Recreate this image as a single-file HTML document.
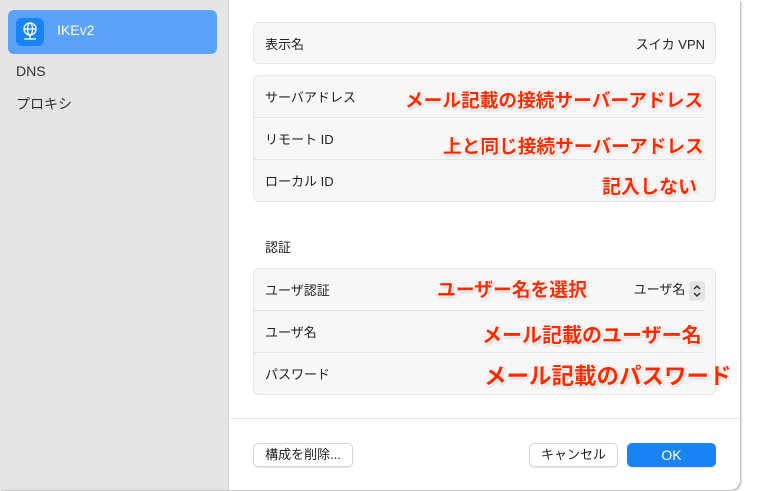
<!DOCTYPE html>
<html><head><meta charset="utf-8"><style>
*{margin:0;padding:0;box-sizing:border-box}
body{width:768px;height:491px;background:#fff;position:relative;overflow:hidden;font-family:"Liberation Sans","Noto Sans CJK JP",sans-serif;color:#222;font-size:13px}
.win{position:absolute;left:0;top:0;width:740px;height:490px;background:#fff;border-bottom-right-radius:10px;box-shadow:1px 1px 2px rgba(0,0,0,.35);overflow:hidden}
.side{position:absolute;left:0;top:0;width:229px;height:490px;background:#e4e4e4;border-right:1px solid #d0d0d0}
.sel{position:absolute;left:8px;top:10px;width:209px;height:44px;background:#5aa2fb;border-radius:6px}
.ico{position:absolute;left:8px;top:8px;width:28px;height:28px;background:#1a84f7;border-radius:6px}
.sel span{position:absolute;left:49px;top:12px;color:#fff;font-size:14px}
.si{position:absolute;left:16px;font-size:14px;color:#333}
.grp{position:absolute;left:253px;width:463px;background:#f7f7f7;border:1px solid #e6e6e6;border-radius:6px}
.row{position:relative;height:42px;border-bottom:1px solid #e4e4e4;margin:0 10px 0 0}
.row:last-child{border-bottom:none}
.row .l{position:absolute;left:11px;top:11px;font-size:13px}
.red{position:absolute;color:#ff2a00;font-weight:bold;white-space:nowrap;text-shadow:0 0 2px #fff,1px 1px 1px #fff,-1px -1px 1px #fff,1px 1px 3px rgba(0,0,0,.35)}
.btn{position:absolute;top:443px;height:24px;background:#fff;border:1px solid #d6d6d6;border-radius:5px;font-size:13px;text-align:center;line-height:22px;box-shadow:0 1px 1px rgba(0,0,0,.1)}
</style></head><body>
<div class="win">
<div class="side">
<div class="sel"><div class="ico"><svg width="28" height="28" viewBox="0 0 28 28" fill="none" stroke="#fff" stroke-width="1.3"><circle cx="14" cy="11" r="6"/><ellipse cx="14" cy="11" rx="2.5" ry="6"/><line x1="8" y1="11" x2="20" y2="11"/><line x1="14" y1="17" x2="14" y2="21"/><line x1="8" y1="21" x2="20" y2="21"/></svg></div><span>IKEv2</span></div>
<div class="si" style="top:63px">DNS</div>
<div class="si" style="top:94px">プロキシ</div>
</div>
<div class="grp" style="top:22px;height:42px"><div class="row"><span class="l">表示名</span><span style="position:absolute;right:0;top:11px">スイカ VPN</span></div></div>
<div class="grp" style="top:75px;height:127px"><div class="row"><span class="l">サーバアドレス</span></div><div class="row"><span class="l">リモート ID</span></div><div class="row"><span class="l">ローカル ID</span></div></div>
<div style="position:absolute;left:265px;top:237px;font-size:13px">認証</div>
<div class="grp" style="top:268px;height:127px"><div class="row"><span class="l">ユーザ認証</span><span style="position:absolute;right:0;top:10px">ユーザ名 <span style="display:inline-block;vertical-align:middle;width:16px;height:20px;background:#e4e4e4;border-radius:4px"><svg width="16" height="20" viewBox="0 0 16 20" fill="none" stroke="#333" stroke-width="1.5"><path d="M5 8l3-3 3 3M5 12l3 3 3-3"/></svg></span></span></div><div class="row"><span class="l">ユーザ名</span></div><div class="row"><span class="l">パスワード</span></div></div>
<div style="position:absolute;left:230px;top:418px;width:510px;border-top:1px solid #e8e8e8"></div>
<div class="btn" style="left:253px;width:100px">構成を削除...</div>
<div class="btn" style="left:529px;width:89px">キャンセル</div>
<div class="btn" style="left:627px;width:89px;background:#1a84f7;border-color:#1a84f7;color:#fff;font-size:14px">OK</div>
</div>
<div class="red" style="left:405px;top:86px;font-size:18.7px">メール記載の接続サーバーアドレス</div>
<div class="red" style="left:443px;top:132px;font-size:18.7px">上と同じ接続サーバーアドレス</div>
<div class="red" style="left:602px;top:172px;font-size:19px">記入しない</div>
<div class="red" style="left:437px;top:275px;font-size:18.8px">ユーザー名を選択</div>
<div class="red" style="left:482px;top:319px;font-size:20px">メール記載のユーザー名</div>
<div class="red" style="left:484px;top:359px;font-size:22.5px">メール記載のパスワード</div>
</body></html>
